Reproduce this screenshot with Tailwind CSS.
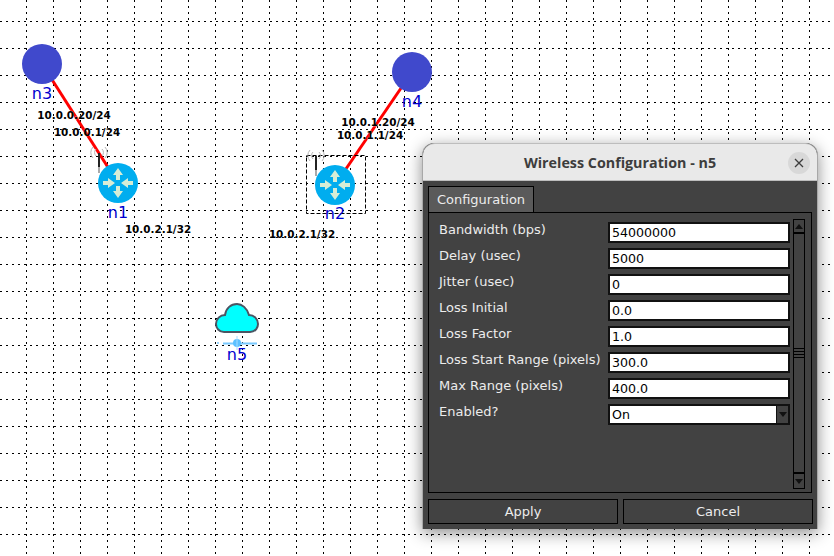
<!DOCTYPE html>
<html lang="en">
<head>
<meta charset="UTF-8">
<title>Wireless Configuration - n5</title>
<script src="https://cdn.jsdelivr.net/npm/@tailwindcss/browser@4"></script>
</head>
<body class="bg-white overflow-hidden font-['DejaVu_Sans',sans-serif]">
<div class="relative w-[834px] h-[556px] overflow-hidden">

  <!-- Canvas -->
  <svg class="absolute inset-0" width="834" height="556" viewBox="0 0 834 556" font-family="DejaVu Sans, sans-serif">
    <defs>
      <g id="router">
        <circle r="20" fill="#00adef"/>
        <g fill="#d6edd6">
          <path d="M0 -15 L-5 -8 L-2 -8 L-2 -3 L2 -3 L2 -8 L5 -8 Z"/>
          <path d="M0 15 L-5 8 L-2 8 L-2 3 L2 3 L2 8 L5 8 Z"/>
          <path d="M-3 0 L-10 -5 L-10 -2 L-15 -2 L-15 2 L-10 2 L-10 5 Z"/>
          <path d="M3 0 L10 -5 L10 -2 L15 -2 L15 2 L10 2 L10 5 Z"/>
        </g>
      </g>
      <g id="antenna">
        <rect x="-1" y="0" width="2" height="14" fill="#222"/>
        <rect x="-1" y="14" width="2" height="6" fill="#aaa"/>
        <g fill="none" stroke="#b5b5b5" stroke-width="1">
          <path d="M-3 -4 A5 5 0 0 0 -3 3"/>
          <path d="M3 -4 A5 5 0 0 1 3 3"/>
          <path d="M-6 -6 A8 8 0 0 0 -6 5"/>
          <path d="M6 -6 A8 8 0 0 1 6 5"/>
        </g>
      </g>
    </defs>

    <g stroke="#000" stroke-width="1" stroke-dasharray="2 4">
      <path d="M0 21.5H834M0 48.5H834M0 75.5H834M0 102.5H834M0 129.5H834M0 156.5H834M0 183.5H834M0 210.5H834M0 237.5H834M0 264.5H834M0 291.5H834M0 318.5H834M0 345.5H834M0 372.5H834M0 399.5H834M0 426.5H834M0 453.5H834M0 480.5H834M0 507.5H834M0 534.5H834"/>
      <path d="M26.5 0V556M53.5 0V556M80.5 0V556M107.5 0V556M134.5 0V556M161.5 0V556M188.5 0V556M215.5 0V556M242.5 0V556M269.5 0V556M296.5 0V556M323.5 0V556M350.5 0V556M377.5 0V556M404.5 0V556M431.5 0V556M458.5 0V556M485.5 0V556M512.5 0V556M539.5 0V556M566.5 0V556M593.5 0V556M620.5 0V556M647.5 0V556M674.5 0V556M701.5 0V556M728.5 0V556M755.5 0V556M782.5 0V556M809.5 0V556"/>
    </g>

    <!-- Links -->
    <line x1="42" y1="64" x2="118" y2="183" stroke="#f00" stroke-width="3"/>
    <line x1="412" y1="72" x2="335" y2="185" stroke="#f00" stroke-width="3"/>

    <!-- Selection box of n2 -->
    <rect x="306.5" y="155.5" width="59" height="58" fill="none" stroke="#000" stroke-dasharray="4 2"/>

    <!-- Nodes -->
    <circle cx="42" cy="64" r="20" fill="#4049cc"/>
    <circle cx="412" cy="72" r="20" fill="#4049cc"/>
    <use href="#antenna" x="99" y="153"/>
    <use href="#antenna" x="316" y="156"/>
    <use href="#router" x="118" y="183"/>
    <use href="#router" x="335" y="185"/>

    <!-- n5 -->
    <path d="M224 332 H250 C256 332 258 327 258 324 C258 319 254 315 249 315 C247 308 242 304 237 304 C231 304 226 308 225 315 C220 315 216 319 216 324 C216 328 219 332 224 332 Z" fill="#00ffff" stroke="#4b5563" stroke-width="2"/>
    <path d="M223 343.5 H257" stroke="#79c9ff" stroke-width="2"/>
    <circle cx="237" cy="343" r="4" fill="#5cc0ff"/>
    <circle cx="218" cy="343" r="1" fill="#79c9ff"/>
    <path d="M237 336 V350" stroke="#a5dcff" stroke-width="1"/>

    <!-- Node labels -->
    <g fill="#0000d0" font-size="16" text-anchor="middle">
      <text x="42" y="99">n3</text>
      <text x="412" y="107">n4</text>
      <text x="118" y="218">n1</text>
      <text x="335" y="219">n2</text>
      <text x="237" y="360">n5</text>
    </g>

    <!-- Link labels -->
    <g fill="#000" font-size="10.4" font-weight="700" text-anchor="middle" stroke="#fff" stroke-width="0.3" paint-order="stroke">
      <text x="74" y="119">10.0.0.20/24</text>
      <text x="87" y="136">10.0.0.1/24</text>
      <text x="158" y="233">10.0.2.1/32</text>
      <text x="378" y="126">10.0.1.20/24</text>
      <text x="370" y="139">10.0.1.1/24</text>
      <text x="302" y="238">10.0.2.1/32</text>
    </g>
  </svg>

  <!-- Dialog window -->
  <div class="absolute left-[422px] top-[143px] w-[396px] h-[386px] flex flex-col rounded-t-[12px] overflow-hidden bg-[#424242] border-x border-[#a8a8a8] shadow-[0_4px_16px_rgba(0,0,0,0.45)]">
    <div class="h-[38px] shrink-0 relative flex items-center justify-center pt-[2px] bg-[#e9e9e9] border-t border-b border-[#bdbdbd] rounded-t-[12px]">
      <span class="font-['Open_Sans',sans-serif] font-bold text-[14.3px] text-[#3d3d3d]">Wireless Configuration - n5</span>
      <div class="absolute right-[7px] top-[8px] w-[22px] h-[22px] rounded-full bg-[#d8d8d8] flex items-center justify-center">
        <svg width="10" height="10" viewBox="0 0 10 10"><path d="M1 1 L9 9 M9 1 L1 9" stroke="#3d3d3d" stroke-width="1.3"/></svg>
      </div>
    </div>

    <div class="flex-1 flex flex-col px-[5px] pt-[5px] pb-[5px]">
      <!-- Tab -->
      <div class="w-[106px] h-[26px] flex items-center justify-center bg-[#5a5a5a] border-t border-x border-black text-[#ececec] text-[13px]">Configuration</div>

      <!-- Tab frame -->
      <div class="w-[384px] h-[281px] flex gap-[2px] pl-[10px] pr-[6px] pt-[6px] border border-black">
        <div class="w-[352px] shrink-0 flex flex-col pt-[3px]">
          <div class="grid grid-cols-[169px_182px] h-[26px]">
            <span class="text-[13px] leading-[16px] text-[#ececec]">Bandwidth (bps)</span>
            <div class="h-[21px] bg-white border-2 border-[#111] pl-[2px] text-[12.6px] leading-[18px] text-black">54000000</div>
          </div>
          <div class="grid grid-cols-[169px_182px] h-[26px]">
            <span class="text-[13px] leading-[16px] text-[#ececec]">Delay (usec)</span>
            <div class="h-[21px] bg-white border-2 border-[#111] pl-[2px] text-[12.6px] leading-[18px] text-black">5000</div>
          </div>
          <div class="grid grid-cols-[169px_182px] h-[26px]">
            <span class="text-[13px] leading-[16px] text-[#ececec]">Jitter (usec)</span>
            <div class="h-[21px] bg-white border-2 border-[#111] pl-[2px] text-[12.6px] leading-[18px] text-black">0</div>
          </div>
          <div class="grid grid-cols-[169px_182px] h-[26px]">
            <span class="text-[13px] leading-[16px] text-[#ececec]">Loss Initial</span>
            <div class="h-[21px] bg-white border-2 border-[#111] pl-[2px] text-[12.6px] leading-[18px] text-black">0.0</div>
          </div>
          <div class="grid grid-cols-[169px_182px] h-[26px]">
            <span class="text-[13px] leading-[16px] text-[#ececec]">Loss Factor</span>
            <div class="h-[21px] bg-white border-2 border-[#111] pl-[2px] text-[12.6px] leading-[18px] text-black">1.0</div>
          </div>
          <div class="grid grid-cols-[169px_182px] h-[26px]">
            <span class="text-[13px] leading-[16px] text-[#ececec]">Loss Start Range (pixels)</span>
            <div class="h-[21px] bg-white border-2 border-[#111] pl-[2px] text-[12.6px] leading-[18px] text-black">300.0</div>
          </div>
          <div class="grid grid-cols-[169px_182px] h-[26px]">
            <span class="text-[13px] leading-[16px] text-[#ececec]">Max Range (pixels)</span>
            <div class="h-[21px] bg-white border-2 border-[#111] pl-[2px] text-[12.6px] leading-[18px] text-black">400.0</div>
          </div>
          <div class="grid grid-cols-[169px_182px] h-[26px]">
            <span class="text-[13px] leading-[16px] text-[#ececec]">Enabled?</span>
            <div class="h-[21px] flex border-2 border-[#111]">
              <div class="flex-1 bg-white pl-[2px] text-[12.6px] leading-[18px] text-black">On</div>
              <div class="w-[12px] flex items-center justify-center bg-[#424242] border-l border-[#111]">
                <svg width="8" height="5" viewBox="0 0 8 5"><path d="M0 0 H8 L4 5 Z" fill="#111"/></svg>
              </div>
            </div>
          </div>
        </div>

        <!-- Scrollbar -->
        <div class="w-[14px] h-[270px] flex flex-col border border-black bg-[#333]">
          <div class="h-[14px] shrink-0 flex items-center justify-center bg-[#424242] border-b-2 border-black">
            <svg width="8" height="5" viewBox="0 0 8 5"><path d="M0 5 H8 L4 0 Z" fill="#111"/></svg>
          </div>
          <div class="flex-1 flex items-center justify-center bg-[#424242] border-b-2 border-black">
            <div class="w-full h-[10px] flex flex-col justify-between">
              <div class="h-px bg-black"></div><div class="h-px bg-black"></div><div class="h-px bg-black"></div><div class="h-px bg-black"></div>
            </div>
          </div>
          <div class="h-[14px] shrink-0 flex items-center justify-center bg-[#424242]">
            <svg width="8" height="5" viewBox="0 0 8 5"><path d="M0 0 H8 L4 5 Z" fill="#111"/></svg>
          </div>
        </div>
      </div>

      <!-- Buttons -->
      <div class="w-[385px] grid grid-cols-2 gap-[5px] mt-[6px]">
        <div class="h-[25px] flex items-center justify-center border border-black text-[#ececec] text-[13px]">Apply</div>
        <div class="h-[25px] flex items-center justify-center border border-black text-[#ececec] text-[13px]">Cancel</div>
      </div>
    </div>
  </div>
</div>
</body>
</html>
